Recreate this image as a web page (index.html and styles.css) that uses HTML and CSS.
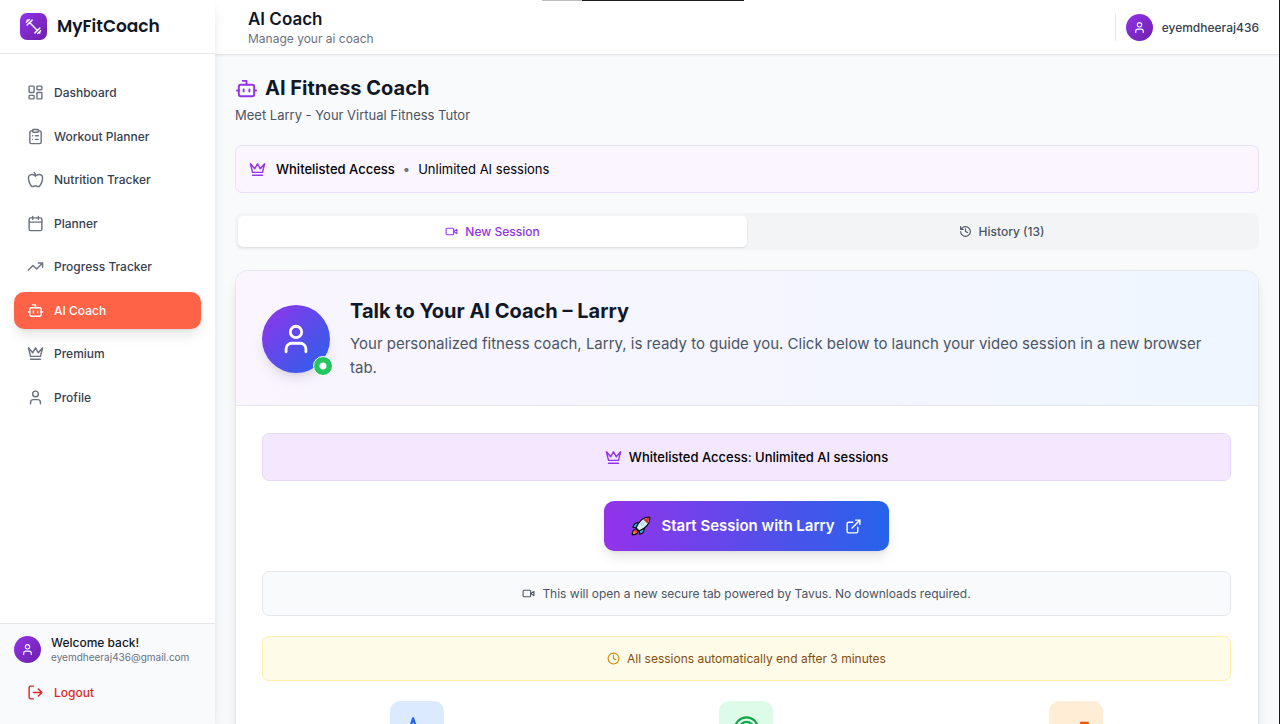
FILE: index.html
```html
<!DOCTYPE html>
<html lang="en">
<head>
<meta charset="utf-8">
<meta name="viewport" content="width=device-width, initial-scale=1">
<title>AI Coach | MyFitCoach</title>
<link rel="stylesheet" href="styles.css">
</head>
<body>
<svg class="sprite" aria-hidden="true">
  <symbol id="dashboard" viewBox="0 0 24 24"><rect width="7" height="9" x="3" y="3" rx="1"/><rect width="7" height="5" x="14" y="3" rx="1"/><rect width="7" height="9" x="14" y="12" rx="1"/><rect width="7" height="5" x="3" y="16" rx="1"/></symbol>
  <symbol id="clipboard" viewBox="0 0 24 24"><rect width="8" height="4" x="8" y="2" rx="1"/><path d="M16 4h2a2 2 0 0 1 2 2v14a2 2 0 0 1-2 2H6a2 2 0 0 1-2-2V6a2 2 0 0 1 2-2h2M12 11h4M12 16h4M8 11h.01M8 16h.01"/></symbol>
  <symbol id="apple" viewBox="0 0 24 24"><path d="M12 20.94c1.5 0 2.75 1.06 4 1.06 3 0 6-8 6-12.22A4.91 4.91 0 0 0 17 5c-2.22 0-4 1.44-5 2-1-.56-2.78-2-5-2a4.9 4.9 0 0 0-5 4.78C2 14 5 22 8 22c1.25 0 2.5-1.06 4-1.06Z"/><path d="M10 2c1 .5 2 2 2 5"/></symbol>
  <symbol id="calendar" viewBox="0 0 24 24"><path d="M8 2v4M16 2v4M3 10h18"/><rect width="18" height="18" x="3" y="4" rx="2"/></symbol>
  <symbol id="trend" viewBox="0 0 24 24"><path d="m22 7-8.500 8.500-5-5L2 17M16 7h6v6"/></symbol>
  <symbol id="bot" viewBox="0 0 24 24"><path d="M12 8V4H8M2 14h2M20 14h2M15 13v2M9 13v2"/><rect width="16" height="12" x="4" y="8" rx="2"/></symbol>
  <symbol id="crown" viewBox="0 0 24 24"><path d="m2 4 3 12h14l3-12-6 7-4-7-4 7-6-7zM5 20h14"/></symbol>
  <symbol id="user" viewBox="0 0 24 24"><path d="M19 21v-2a4 4 0 0 0-4-4H9a4 4 0 0 0-4 4v2"/><circle cx="12" cy="7" r="4"/></symbol>
  <symbol id="logout" viewBox="0 0 24 24"><path d="M9 21H5a2 2 0 0 1-2-2V5a2 2 0 0 1 2-2h4M16 17l5-5-5-5M21 12H9"/></symbol>
  <symbol id="video" viewBox="0 0 24 24"><path d="m22 8-6 4 6 4V8Z"/><rect width="14" height="12" x="2" y="6" rx="2"/></symbol>
  <symbol id="history" viewBox="0 0 24 24"><path d="M3 12a9 9 0 1 0 9-9 9.750 9.750 0 0 0-6.740 2.740L3 8M3 3v5h5M12 7v5l4 2"/></symbol>
  <symbol id="external" viewBox="0 0 24 24"><path d="M15 3h6v6M10 14 21 3M18 13v6a2 2 0 0 1-2 2H5a2 2 0 0 1-2-2V8a2 2 0 0 1 2-2h6"/></symbol>
  <symbol id="clock" viewBox="0 0 24 24"><circle cx="12" cy="12" r="10"/><path d="M12 6v6l4 2"/></symbol>
  <symbol id="dumbbell" viewBox="0 0 24 24"><path d="m6.500 6.500 11 11M21 21l-1-1M3 3l1 1M18 22l4-4M2 6l4-4M3 10l7-7M14 21l7-7"/></symbol>
  <symbol id="activity" viewBox="0 0 24 24"><path d="M22 12h-4l-3 9L9 3l-3 9H2"/></symbol>
  <symbol id="target" viewBox="0 0 24 24"><circle cx="12" cy="12" r="10"/><circle cx="12" cy="12" r="6"/><circle cx="12" cy="12" r="2"/></symbol>
</svg>
<div class="top-strip"></div>
<div class="app">
  <aside class="sidebar">
    <div class="brand">
      <span class="brand-mark"><svg class="icon"><use href="#dumbbell"/></svg></span>
      <span class="brand-name">MyFitCoach</span>
    </div>
    <nav class="nav">
      <a class="nav-item" href="#"><svg class="icon"><use href="#dashboard"/></svg>Dashboard</a>
      <a class="nav-item" href="#"><svg class="icon"><use href="#clipboard"/></svg>Workout Planner</a>
      <a class="nav-item" href="#"><svg class="icon"><use href="#apple"/></svg>Nutrition Tracker</a>
      <a class="nav-item" href="#"><svg class="icon"><use href="#calendar"/></svg>Planner</a>
      <a class="nav-item" href="#"><svg class="icon"><use href="#trend"/></svg>Progress Tracker</a>
      <a class="nav-item active" href="#" aria-current="page"><svg class="icon"><use href="#bot"/></svg>AI Coach</a>
      <a class="nav-item" href="#"><svg class="icon"><use href="#crown"/></svg>Premium</a>
      <a class="nav-item" href="#"><svg class="icon"><use href="#user"/></svg>Profile</a>
    </nav>
    <div class="account">
      <div class="account-row">
        <span class="avatar"><svg class="icon"><use href="#user"/></svg></span>
        <div>
          <div class="welcome">Welcome back!</div>
          <div class="email">eyemdheeraj436@gmail.com</div>
        </div>
      </div>
      <button class="logout" type="button"><svg class="icon"><use href="#logout"/></svg>Logout</button>
    </div>
  </aside>
  <div class="page">
    <header class="topbar">
      <div>
        <div class="topbar-title">AI Coach</div>
        <div class="topbar-sub">Manage your ai coach</div>
      </div>
      <div class="user">
        <span class="avatar"><svg class="icon"><use href="#user"/></svg></span>
        <span>eyemdheeraj436</span>
      </div>
    </header>
    <main class="content">
      <div>
        <h1 class="title"><svg class="icon"><use href="#bot"/></svg>AI Fitness Coach</h1>
        <p class="subtitle">Meet Larry - Your Virtual Fitness Tutor</p>
      </div>
      <div class="access">
        <svg class="icon"><use href="#crown"/></svg>
        <strong>Whitelisted Access</strong>
        <span class="dot">•</span>
        <span>Unlimited AI sessions</span>
      </div>
      <div class="tabs" role="tablist">
        <button class="tab selected" type="button" role="tab" aria-selected="true"><svg class="icon"><use href="#video"/></svg>New Session</button>
        <button class="tab" type="button" role="tab" aria-selected="false"><svg class="icon"><use href="#history"/></svg>History (13)</button>
      </div>
      <section class="card">
        <div class="card-head">
          <div class="coach">
            <svg class="icon"><use href="#user"/></svg>
            <span class="status"></span>
          </div>
          <div>
            <h2 class="card-title">Talk to Your AI Coach – Larry</h2>
            <p class="card-text">Your personalized fitness coach, Larry, is ready to guide you. Click below to launch your video session in a new browser tab.</p>
          </div>
        </div>
        <div class="card-body">
          <div class="notice unlimited"><svg class="icon"><use href="#crown"/></svg>Whitelisted Access: Unlimited AI sessions</div>
          <button class="start" type="button">
            <svg class="rocket" viewBox="0 0 32 32" aria-hidden="true">
              <path d="M4 23c-2 2-2 5-2 7 3 0 6 0 8-2l1-4-3-3z" fill="#f7931e" stroke="#111" stroke-width="2" stroke-linejoin="round"/>
              <path d="M12 11c-4-1-8 2-9 7l6 1zM21 20c1 4-2 8-7 9l-1-6z" fill="#2bb3e8" stroke="#111" stroke-width="2" stroke-linejoin="round"/>
              <path d="M30 2c-9-1-17 6-22 17l5 5C24 19 31 11 30 2z" fill="#d5eef8" stroke="#111" stroke-width="2" stroke-linejoin="round"/>
              <path d="M29 3c-3 0-6 1-9 3l6 6c2-3 3-6 3-9z" fill="#d32f3a"/>
              <path d="m7 21 4 4-3 2-3-3z" fill="#e53935"/>
              <circle cx="18" cy="13" r="2" fill="#fff" stroke="#8aa" stroke-width="1"/>
            </svg>
            Start Session with Larry
            <svg class="icon"><use href="#external"/></svg>
          </button>
          <div class="notice info"><svg class="icon"><use href="#video"/></svg>This will open a new secure tab powered by Tavus. No downloads required.</div>
          <div class="notice limit"><svg class="icon"><use href="#clock"/></svg>All sessions automatically end after 3 minutes</div>
          <div class="features">
            <span class="tile blue"><svg class="icon"><use href="#activity"/></svg></span>
            <span class="tile green"><svg class="icon"><use href="#target"/></svg></span>
            <span class="tile orange"><svg class="icon"><use href="#trend"/></svg></span>
          </div>
        </div>
      </section>
    </main>
  </div>
</div>
</body>
</html>
```
FILE: styles.css
```css
* { box-sizing: border-box; }
body {
  margin: 0;
  background: #f9fafb;
  color: #111827;
  font: 12px/17px Inter, sans-serif;
}
h1, h2, p { margin: 0; }
button { font: inherit; border: 0; cursor: pointer; }
.sprite { position: absolute; width: 0; height: 0; }
.icon {
  flex: none;
  width: 17px;
  height: 17px;
  fill: none;
  stroke: currentColor;
  stroke-width: 2;
  stroke-linecap: round;
  stroke-linejoin: round;
}
.top-strip {
  position: absolute;
  z-index: 5;
  top: 0;
  left: 542px;
  width: 202px;
  height: 1px;
  background: linear-gradient(90deg, #bdbdbd 20%, #1c1a1e 20%);
}
.app {
  display: flex;
  height: 100vh;
  overflow: hidden;
  border-right: 1px solid #111827;
}

/* Sidebar */
.sidebar {
  position: relative;
  z-index: 2;
  display: flex;
  flex: none;
  flex-direction: column;
  width: 215px;
  background: #fff;
  box-shadow: 0 8px 13px -2px #0000001a, 0 3px 5px -3px #0000001a;
}
.brand {
  display: flex;
  align-items: center;
  gap: 10px;
  padding: 13px 20px;
  border-bottom: 1px solid #e5e7eb;
}
.brand-mark, .avatar {
  display: grid;
  flex: none;
  place-items: center;
  width: 27px;
  height: 27px;
  background: linear-gradient(135deg, #9333ea, #6b21a8);
  color: #fff;
}
.brand-mark { border-radius: 7px; }
.avatar { border-radius: 50%; }
.avatar .icon { width: 13px; height: 13px; }
.brand-name {
  font-family: Poppins, Inter, sans-serif;
  font-size: 17px;
  font-weight: 600;
}
.nav {
  display: flex;
  flex-direction: column;
  justify-content: space-between;
  min-height: 342px;
  margin: 20px 14px auto;
}
.nav-item, .logout {
  display: flex;
  align-items: center;
  gap: 10px;
  padding: 10px 13px;
  border-radius: 10px;
  color: #374151;
  font-weight: 500;
  text-decoration: none;
}
.nav-item .icon { color: #6b7280; }
.nav-item.active {
  background: #ff6347;
  color: #fff;
  box-shadow: 0 8px 13px -2px #0000001a, 0 3px 5px -3px #0000001a;
}
.nav-item.active .icon { color: #fff; }
.account {
  padding: 11px 14px 13px;
  border-top: 1px solid #e5e7eb;
  background: #f9fafb;
}
.account-row {
  display: flex;
  align-items: center;
  gap: 10px;
  margin-bottom: 10px;
}
.welcome { font-weight: 500; line-height: 16px; }
.email { color: #6b7280; font-size: 10px; line-height: 13px; }
.logout { width: 100%; background: none; color: #dc2626; }

/* Top bar */
.page { display: flex; flex: 1; flex-direction: column; min-width: 0; }
.topbar {
  display: flex;
  flex: none;
  align-items: center;
  justify-content: space-between;
  padding: 7px 20px 7px 33px;
  border-bottom: 1px solid #e5e7eb;
  background: #fff;
  box-shadow: 0 1px 2px #0000000d;
}
.topbar-title { font-size: 17px; font-weight: 600; line-height: 24px; }
.topbar-sub { color: #6b7280; line-height: 16px; }
.user {
  display: flex;
  align-items: center;
  gap: 9px;
  padding-left: 10px;
  border-left: 1px solid #e5e7eb;
  color: #374151;
  font-weight: 500;
}

/* Main column */
.content {
  display: flex;
  flex: 1;
  flex-direction: column;
  gap: 20px;
  min-height: 0;
  padding: 20px;
  overflow: auto;
  scrollbar-width: none;
}
.content > * { flex: none; }
.title {
  display: flex;
  align-items: center;
  gap: 7px;
  font-size: 20px;
  font-weight: 700;
  line-height: 27px;
}
.title .icon { width: 23px; height: 23px; color: #9333ea; }
.subtitle { margin-top: 3px; color: #4b5563; font-size: 13px; line-height: 20px; }
.access {
  display: flex;
  align-items: center;
  gap: 8px;
  padding: 13px;
  border: 1px solid #eadffb;
  border-radius: 7px;
  background: #faf5ff;
  color: #000;
  font-size: 13px;
  line-height: 20px;
}
.access strong { margin-left: 2px; font-weight: 500; }
.access .icon, .unlimited .icon { color: #9333ea; }
.dot { color: #6b7280; }
.tabs {
  display: grid;
  grid-template-columns: 1fr 1fr;
  padding: 3px;
  border-radius: 7px;
  background: #f3f4f6;
}
.tab {
  display: flex;
  align-items: center;
  justify-content: center;
  gap: 7px;
  padding: 7px;
  border-radius: 5px;
  background: none;
  color: #4b5563;
  font-weight: 500;
}
.tab.selected { background: #fff; color: #9333ea; box-shadow: 0 1px 2px #0000001a; }
.tab .icon, .info .icon, .limit .icon { width: 13px; height: 13px; }
.card {
  overflow: hidden;
  border: 1px solid #e5e7eb;
  border-radius: 13px;
  background: #fff;
  box-shadow: 0 8px 13px -2px #0000001a, 0 3px 5px -3px #0000001a;
}
.card-head {
  display: flex;
  align-items: center;
  gap: 20px;
  padding: 27px 27px 25px 26px;
  border-bottom: 1px solid #e5e7eb;
  background: linear-gradient(90deg, #faf5ff, #eff6ff);
}
.coach {
  position: relative;
  display: grid;
  flex: none;
  place-items: center;
  width: 68px;
  height: 68px;
  border-radius: 50%;
  background: linear-gradient(135deg, #9333ea, #2563eb);
  color: #fff;
  box-shadow: 0 8px 13px -2px #0000001a, 0 3px 5px -3px #0000001a;
}
.coach .icon { width: 34px; height: 34px; }
.status {
  position: absolute;
  right: -3px;
  bottom: -3px;
  width: 20px;
  height: 20px;
  border: 1px solid #fff;
  border-radius: 50%;
  background: radial-gradient(circle, #fff 3px, #22c55e 4px);
}
.card-title { font-size: 20px; font-weight: 700; line-height: 27px; }
.card-text { margin-top: 7px; color: #4b5563; font-size: 15px; line-height: 24px; }
.card-body {
  display: flex;
  flex-direction: column;
  gap: 20px;
  padding: 27px 27px 27px 26px;
}
.notice {
  display: flex;
  align-items: center;
  justify-content: center;
  gap: 7px;
  padding: 13px;
  border: 1px solid;
  border-radius: 7px;
}
.unlimited {
  border-color: #e5d8fa;
  background: #f3e8ff;
  color: #000;
  font-size: 13px;
  font-weight: 500;
  line-height: 20px;
}
.info { border-color: #e5e7eb; background: #f9fafb; color: #4b5563; }
.limit { border-color: #faf0a8; background: #fefbe8; color: #854d0e; }
.limit .icon { color: #ca8a04; }
.start {
  display: flex;
  align-items: center;
  align-self: center;
  gap: 10px;
  padding: 13px 27px;
  border-radius: 10px;
  background: linear-gradient(90deg, #9333ea, #2563eb);
  color: #fff;
  font-size: 15px;
  font-weight: 600;
  line-height: 24px;
  box-shadow: 0 8px 13px -2px #0000001a, 0 3px 5px -3px #0000001a;
}
.rocket { width: 20px; height: 20px; }
.features {
  display: grid;
  grid-template-columns: repeat(3, 1fr);
  gap: 20px;
  justify-items: center;
}
.tile {
  display: grid;
  place-items: center;
  width: 54px;
  height: 54px;
  border-radius: 10px;
}
.tile .icon { width: 27px; height: 27px; }
.blue { background: #dbeafe; color: #2563eb; }
.green { background: #dcfce7; color: #16a34a; }
.orange { background: #ffedd5; color: #ea580c; }
```
